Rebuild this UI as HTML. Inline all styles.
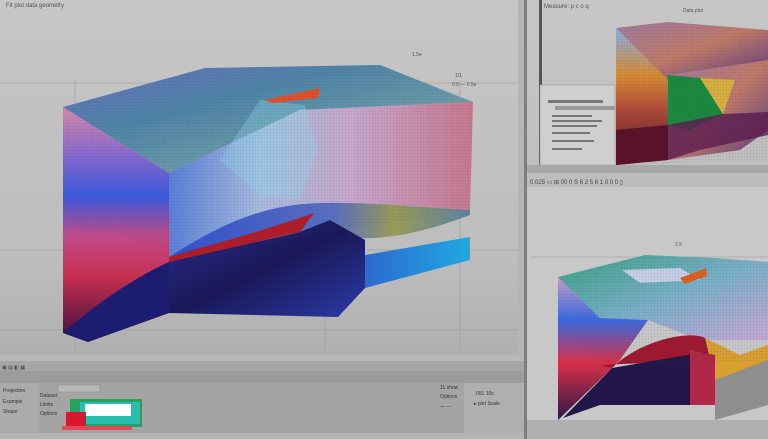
<!DOCTYPE html>
<html><head><meta charset="utf-8"><style>
html,body{margin:0;padding:0;width:768px;height:439px;overflow:hidden;background:#c3c3c3;font-family:"Liberation Sans",sans-serif}
svg{display:block}
</style></head><body>
<svg width="768" height="439" viewBox="0 0 768 439" xmlns="http://www.w3.org/2000/svg">
<defs>
<pattern id="mesh" width="3" height="3" patternUnits="userSpaceOnUse"><path d="M0 0H3M0 0V3" stroke="#334" stroke-opacity=".22" stroke-width=".5" fill="none"/></pattern>
<linearGradient id="bg" x1="0" y1="0" x2="0" y2="1"><stop offset="0" stop-color="#c6c6c6"/><stop offset=".6" stop-color="#bdbdbd"/><stop offset="1" stop-color="#a3a3a3"/></linearGradient>
<linearGradient id="left" x1="0" y1="0" x2="0" y2="1"><stop offset="0" stop-color="#d88aa8"/><stop offset=".2" stop-color="#8a6ad0"/><stop offset=".38" stop-color="#3c5ae0"/><stop offset=".55" stop-color="#c04a88"/><stop offset=".72" stop-color="#c83050"/><stop offset="1" stop-color="#3a1040"/></linearGradient>
<linearGradient id="top" x1="0" y1="0" x2="1" y2="1"><stop offset="0" stop-color="#6a6ec0"/><stop offset=".35" stop-color="#4f84a8"/><stop offset=".7" stop-color="#6ea0a8"/><stop offset="1" stop-color="#8a98c0"/></linearGradient>
<linearGradient id="front" x1="0" y1="0" x2="1" y2="0"><stop offset="0" stop-color="#5a80d8"/><stop offset=".3" stop-color="#a8bce0"/><stop offset=".6" stop-color="#c8a8cc"/><stop offset="1" stop-color="#c87890"/></linearGradient>
<linearGradient id="navy" x1="0" y1="0" x2="1" y2="1"><stop offset="0" stop-color="#2a2c90"/><stop offset=".5" stop-color="#1a1858"/><stop offset="1" stop-color="#2a3aa8"/></linearGradient>
<linearGradient id="cyan" x1="0" y1="0" x2="1" y2="0"><stop offset="0" stop-color="#2c6ad0"/><stop offset="1" stop-color="#20a8e0"/></linearGradient>
<linearGradient id="wave" x1="0" y1="0" x2="1" y2="0"><stop offset="0" stop-color="#3050d0"/><stop offset=".55" stop-color="#5a70c0"/><stop offset=".75" stop-color="#9a9a58"/><stop offset="1" stop-color="#5a80a0"/></linearGradient>
<linearGradient id="tr" x1="0" y1="0" x2="0" y2="1"><stop offset="0" stop-color="#8ab0e8"/><stop offset=".35" stop-color="#d88a30"/><stop offset=".6" stop-color="#b04a38"/><stop offset="1" stop-color="#4a1028"/></linearGradient>
<linearGradient id="tr2" x1="0" y1="0" x2="1" y2="1"><stop offset="0" stop-color="#a07aa0"/><stop offset=".5" stop-color="#c07a68"/><stop offset="1" stop-color="#5a3a80"/></linearGradient>
<linearGradient id="brl" x1="0" y1="0" x2="0" y2="1"><stop offset="0" stop-color="#c8a0c8"/><stop offset=".3" stop-color="#3a6ae0"/><stop offset=".6" stop-color="#d8304a"/><stop offset="1" stop-color="#2a1848"/></linearGradient>
<linearGradient id="brt" x1="0" y1="0" x2="1" y2="1"><stop offset="0" stop-color="#3aa080"/><stop offset=".5" stop-color="#78b0c8"/><stop offset="1" stop-color="#c8a8d8"/></linearGradient>
</defs>
<rect width="768" height="439" fill="url(#bg)"/>
<g stroke="#9a9a9a" stroke-width=".6">
<line x1="0" y1="83" x2="520" y2="83"/><line x1="0" y1="250" x2="520" y2="250"/><line x1="0" y1="330" x2="520" y2="330"/>
<line x1="75" y1="80" x2="75" y2="350"/><line x1="325" y1="80" x2="325" y2="350"/><line x1="460" y1="80" x2="460" y2="350"/>
</g>
<text x="6" y="7" font-size="6" fill="#555">Fit plot data geometry</text>
<text x="412" y="56" font-size="5" fill="#555">1.5e</text>
<text x="455" y="77" font-size="5" fill="#555">1/1</text>
<text x="452" y="86" font-size="5" fill="#555">0.5 — 0.5e</text>

<!-- main shape -->
<polygon points="63,107 169,173 169,313 88,342 63,333" fill="url(#left)"/>
<path d="M63,333 C100,300 140,275 169,262 L169,313 L88,342 Z" fill="#1c1c70"/>
<polygon points="63,107 205,68 380,65 473,102 300,110 169,173" fill="url(#top)"/>
<polygon points="169,173 300,110 473,102 470,210 360,205 169,257" fill="url(#front)"/>
<polygon points="260,100 305,105 318,150 300,200 260,195 220,160" fill="#8ed8ec" opacity=".35"/>
<polygon points="265,100 320,88 318,98 272,103" fill="#e0502a"/>
<path d="M169,257 C220,225 260,205 320,203 C380,202 420,208 470,210 L470,215 C430,230 380,245 330,235 C290,225 250,245 169,262 Z" fill="url(#wave)"/>
<path d="M169,257 C210,245 250,235 314,213 L300,232 C260,240 220,252 169,265 Z" fill="#b01c28"/>
<polygon points="169,262 300,232 330,220 365,240 365,288 338,317 169,313" fill="url(#navy)"/>
<polygon points="365,255 470,237 470,260 365,288" fill="url(#cyan)"/>
<polygon points="63,107 205,68 380,65 473,102 470,210 169,257 169,173" fill="url(#mesh)"/>
<polygon points="63,107 169,173 169,250 63,220" fill="url(#mesh)"/>

<!-- panel dividers -->
<rect x="518" y="0" width="8" height="360" fill="#b5b5b5"/>
<rect x="524" y="0" width="3" height="439" fill="#7e7e7e"/>
<rect x="539" y="0" width="3" height="165" fill="#555"/>
<text x="544" y="8" font-size="6" fill="#555">Measure: p  c  o  q</text>
<text x="683" y="12" font-size="5" fill="#555">Data plot</text>
<rect x="540" y="85" width="75" height="80" fill="#cfcfcf" stroke="#999" stroke-width=".6"/>
<g fill="#777"><rect x="548" y="100" width="55" height="3"/><rect x="555" y="106" width="60" height="4" fill="#999"/><rect x="552" y="115" width="40" height="2"/><rect x="552" y="120" width="50" height="2"/><rect x="552" y="125" width="45" height="2"/><rect x="552" y="132" width="38" height="2"/><rect x="552" y="140" width="42" height="2"/><rect x="552" y="148" width="30" height="2"/></g>
<polygon points="616,28 668,22 768,30 768,75 690,75 668,80" fill="url(#tr2)"/>
<polygon points="616,28 668,80 668,160 616,165" fill="url(#tr)"/>
<polygon points="668,75 768,60 768,130 740,150 668,160" fill="url(#tr2)"/>
<polygon points="668,75 700,78 723,114 690,130 668,125" fill="#1a8a3e"/>
<polygon points="700,78 735,80 723,114" fill="#d8b040"/>
<polygon points="668,125 723,114 768,112 768,135 700,150 668,160" fill="#5a1a50" opacity=".8"/>
<polygon points="616,130 668,125 668,160 616,165" fill="#5a1028"/>
<polygon points="616,28 668,22 768,30 768,160 616,165" fill="url(#mesh)"/>
<rect x="527" y="165" width="241" height="8" fill="#a8a8a8"/>
<rect x="527" y="173" width="241" height="14" fill="#bdbdbd"/>
<text x="530" y="184" font-size="6" fill="#444">0.025  ▭  ⊞ 00 0 S 6 2 5 8 1 0 0 0 ▯</text>
<rect x="527" y="187" width="241" height="252" fill="#c8c8c8"/>
<line x1="530" y1="257" x2="768" y2="257" stroke="#999" stroke-width=".6"/>
<text x="675" y="246" font-size="5" fill="#555">2.5</text>
<polygon points="558,277 645,255 715,258 768,262 768,340 700,340 648,320 600,318 558,290" fill="url(#brt)"/>
<polygon points="622,270 680,268 700,280 640,283" fill="#c8d0e8"/>
<polygon points="680,278 706,268 707,276 685,284" fill="#e06020"/>
<polygon points="558,277 600,318 648,320 620,360 612,368 558,420" fill="url(#brl)"/>
<path d="M612,368 C640,340 690,330 705,338 L720,365 L768,380 L768,390 L715,360 L600,365 Z" fill="#a01830"/>
<polygon points="705,338 740,355 768,345 768,385 715,380" fill="#d8a030"/>
<polygon points="563,418 612,368 705,352 715,360 715,405 600,405" fill="#221648"/>
<polygon points="690,350 715,355 715,405 690,405" fill="#b02848"/>
<polygon points="715,380 768,360 768,405 715,420" fill="#8e8e8e"/>
<polygon points="558,277 645,255 768,262 768,360 612,368 558,330" fill="url(#mesh)"/>
<rect x="527" y="420" width="241" height="19" fill="#b0b0b0"/>

<rect x="0" y="355" width="524" height="6" fill="#b8b8b8"/>
<rect x="0" y="361" width="524" height="10" fill="#a6a6a6"/>
<text x="2" y="369" font-size="5" fill="#444">▣ ▤  ◧ ▦</text>
<rect x="0" y="371" width="524" height="12" fill="#9c9c9c"/>
<rect x="0" y="383" width="524" height="50" fill="#a4a4a4"/>
<rect x="0" y="383" width="38" height="50" fill="#ababab"/>
<text x="3" y="392" font-size="5" fill="#333">Projection</text>
<text x="3" y="403" font-size="5" fill="#333">Example</text>
<text x="3" y="413" font-size="5" fill="#333">Shape</text>
<text x="40" y="397" font-size="5" fill="#333">Dataset</text>
<text x="40" y="406" font-size="5" fill="#333">Limits</text>
<text x="40" y="415" font-size="5" fill="#333">Options</text>
<rect x="58" y="385" width="42" height="7" fill="#b8b8b8" stroke="#888" stroke-width=".5"/>
<rect x="70" y="399" width="72" height="28" fill="#2aa060"/>
<rect x="80" y="402" width="60" height="22" fill="#29bfb0"/>
<rect x="85" y="404" width="46" height="12" fill="#fff"/>
<rect x="66" y="412" width="20" height="14" fill="#d8182c"/>
<rect x="62" y="426" width="70" height="4" fill="#e04a5a"/>
<text x="440" y="389" font-size="5" fill="#333">11 show</text>
<text x="440" y="398" font-size="5" fill="#333">Options</text>
<text x="440" y="408" font-size="5" fill="#333">—  —</text>
<rect x="464" y="383" width="60" height="50" fill="#afafaf"/>
<text x="476" y="395" font-size="5" fill="#333">001 10s</text>
<text x="474" y="405" font-size="5" fill="#333">▸ plot Scale</text>
<rect x="0" y="433" width="524" height="6" fill="#b4b4b4"/>
</svg>
</body></html>
